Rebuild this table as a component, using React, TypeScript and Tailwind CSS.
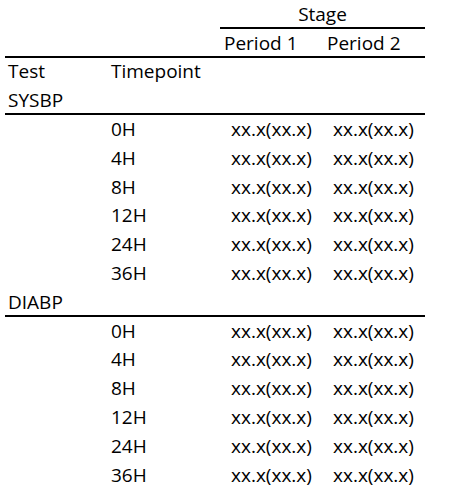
const times = ["0H", "4H", "8H", "12H", "24H", "36H"];

function ValueRow({ time }: { time: string }) {
  return (
    <div className="flex h-[28.8px] items-center">
      <div className="w-[101px]" />
      <div className="w-[114px] pl-[5px]">{time}</div>
      <div className="w-[102px] pl-[11px]">xx.x(xx.x)</div>
      <div className="w-[103px] pl-[11px]">xx.x(xx.x)</div>
    </div>
  );
}

export default function App() {
  return (
    <div className="min-h-[490px] w-[474px] bg-white text-[19px] leading-none text-black" style={{ fontFamily: '"Open Sans", sans-serif' }}>
      <div className="w-[425px] pl-[5px]">
        {/* header */}
        <div className="flex h-[28.8px]">
          <div className="w-[215px]" />
          <div className="flex w-[205px] items-center justify-center border-b-2 border-black pt-[3px]">Stage</div>
        </div>
        <div className="flex h-[28.8px] items-center border-b-2 border-black pt-[2px]">
          <div className="w-[215px]" />
          <div className="w-[102px] pl-[4px]">Period 1</div>
          <div className="w-[103px] pl-[5px]">Period 2</div>
        </div>
        <div className="flex h-[28.8px] items-center">
          <div className="w-[101px] pl-[3px]">Test</div>
          <div className="w-[114px] pl-[5px]">Timepoint</div>
        </div>

        {/* SYSBP */}
        <div className="flex h-[28.8px] items-center border-b-2 border-black pt-[2px] pl-[3px]">SYSBP</div>
        {times.map((t) => (
          <ValueRow key={"s" + t} time={t} />
        ))}

        {/* DIABP */}
        <div className="flex h-[28.8px] items-center border-b-2 border-black pt-[2px] pl-[3px]">DIABP</div>
        {times.map((t) => (
          <ValueRow key={"d" + t} time={t} />
        ))}
      </div>
    </div>
  );
}
